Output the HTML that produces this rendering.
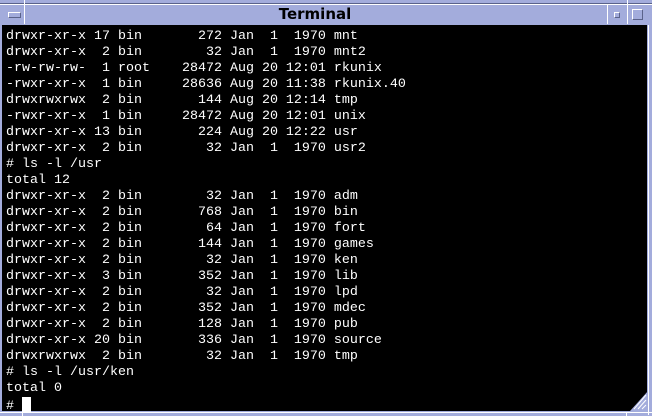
<!DOCTYPE html>
<html><head><meta charset="utf-8"><style>
html,body{margin:0;padding:0;}
body{width:652px;height:416px;background:#a3acdc;position:relative;overflow:hidden;}
.top{position:absolute;left:0;top:0;width:652px;height:3px;background:#a3acdc;border-bottom:1px solid #5a628a;}
.bar{position:absolute;left:0;top:4px;width:652px;height:20px;background:#a3acdc;border-top:1px solid #fff;}
.title{position:absolute;left:0;width:630px;top:4px;text-align:center;font:bold 15px "DejaVu Sans","Liberation Sans",sans-serif;color:#000;line-height:20px;}
.term{position:absolute;left:2px;top:25px;width:645px;height:386px;background:#000;}
pre{margin:0;position:absolute;left:4px;top:4px;font:13.33px/16px "Liberation Mono","DejaVu Sans Mono",monospace;color:#fff;}
.cur{display:inline-block;width:9px;height:15px;background:#fff;vertical-align:-3px;}
.rb{position:absolute;left:648px;top:25px;width:1px;height:390px;background:#fff;}
.bb{position:absolute;left:0;top:412px;width:652px;height:1px;background:#fff;}
</style></head><body>
<div class="top"></div>
<div class="bar"></div>
<div style="position:absolute;left:8px;top:12px;width:11px;height:4px;border:1px solid #fff;border-right-color:#5a628a;border-bottom-color:#5a628a;"></div>
<div style="position:absolute;left:24px;top:0;width:1px;height:24px;background:#fff"></div>
<div class="title">Terminal</div>
<div style="position:absolute;left:607px;top:4px;width:1px;height:20px;background:#fff"></div>
<div style="position:absolute;left:627px;top:0;width:1px;height:24px;background:#fff"></div>
<div style="position:absolute;left:614px;top:12px;width:4px;height:4px;border:1px solid #fff;border-right-color:#5a628a;border-bottom-color:#5a628a;"></div>
<div style="position:absolute;left:632px;top:9px;width:9px;height:9px;border:1px solid #fff;border-right-color:#5a628a;border-bottom-color:#5a628a;"></div>
<div class="term"><pre>drwxr-xr-x 17 bin       272 Jan  1  1970 mnt
drwxr-xr-x  2 bin        32 Jan  1  1970 mnt2
-rw-rw-rw-  1 root    28472 Aug 20 12:01 rkunix
-rwxr-xr-x  1 bin     28636 Aug 20 11:38 rkunix.40
drwxrwxrwx  2 bin       144 Aug 20 12:14 tmp
-rwxr-xr-x  1 bin     28472 Aug 20 12:01 unix
drwxr-xr-x 13 bin       224 Aug 20 12:22 usr
drwxr-xr-x  2 bin        32 Jan  1  1970 usr2
# ls -l /usr
total 12
drwxr-xr-x  2 bin        32 Jan  1  1970 adm
drwxr-xr-x  2 bin       768 Jan  1  1970 bin
drwxr-xr-x  2 bin        64 Jan  1  1970 fort
drwxr-xr-x  2 bin       144 Jan  1  1970 games
drwxr-xr-x  2 bin        32 Jan  1  1970 ken
drwxr-xr-x  3 bin       352 Jan  1  1970 lib
drwxr-xr-x  2 bin        32 Jan  1  1970 lpd
drwxr-xr-x  2 bin       352 Jan  1  1970 mdec
drwxr-xr-x  2 bin       128 Jan  1  1970 pub
drwxr-xr-x 20 bin       336 Jan  1  1970 source
drwxrwxrwx  2 bin        32 Jan  1  1970 tmp
# ls -l /usr/ken
total 0
# <span class="cur"></span></pre></div>
<div class="rb"></div>
<div class="bb"></div>
<div style="position:absolute;left:626px;top:413px;width:1px;height:3px;background:#fff"></div>
<div style="position:absolute;left:22px;top:412px;width:1px;height:4px;background:#fff"></div>
<svg style="position:absolute;left:630px;top:391px" width="18" height="20"><path d="M18 0 L18 20 L0 20 Z" fill="#a3acdc"/><path d="M4 18 L16 4 M8 18 L16 9 M12 18 L16 14" stroke="#fff" stroke-width="1"/></svg>
</body></html>
